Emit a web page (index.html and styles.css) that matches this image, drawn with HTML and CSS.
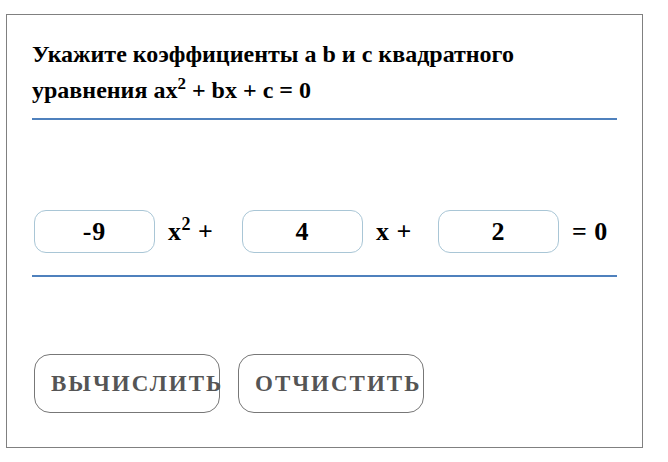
FILE: index.html
```html
<!DOCTYPE html>
<html lang="ru">
<head>
<meta charset="utf-8">
<link rel="stylesheet" href="styles.css">
</head>
<body>
<div class="card">
  <h1 class="title">Укажите коэффициенты а b и с квадратного уравнения ax<sup>2</sup> + bx + c = 0</h1>
  <div class="equation">
    <input class="coef" type="text" value="-9">
    <span class="term term-a">x<sup>2</sup> +</span>
    <input class="coef" type="text" value="4">
    <span class="term term-b">x +</span>
    <input class="coef" type="text" value="2">
    <span class="term">= 0</span>
  </div>
  <div class="actions">
    <button class="btn" type="button">Вычислить</button>
    <button class="btn" type="button">Отчистить</button>
  </div>
</div>
</body>
</html>
```

FILE: styles.css
```css
html, body {
  margin: 0;
  padding: 0;
  background: #fff;
}
body {
  font-family: "Liberation Serif", "Times New Roman", serif;
  color: #000;
}
.card {
  margin: 14px 0 0 6px;
  width: 637px;
  height: 434px;
  border: 1px solid #808080;
  padding: 0 25px;
  box-sizing: border-box;
}
.title {
  margin: 21px 0 0 0;
  font-size: 24px;
  font-weight: bold;
  letter-spacing: 0;
  line-height: 36px;
  padding-bottom: 10px;
  border-bottom: 2px solid #4f81bd;
}
.title sup {
  font-size: 17px;
  line-height: 0;
}
.equation {
  margin-top: 90px;
  display: flex;
  align-items: center;
  padding: 0 2px 22px 2px;
  border-bottom: 2px solid #4f81bd;
}
.coef {
  flex: none;
  width: 121px;
  height: 43px;
  box-sizing: border-box;
  border: 1px solid #a9c6d6;
  border-radius: 12px;
  text-align: center;
  font-family: inherit;
  font-size: 26px;
  font-weight: bold;
  letter-spacing: 1px;
  color: #000;
  padding: 0;
  outline: none;
  background: #fff;
}
.term {
  flex: none;
  box-sizing: border-box;
  padding-left: 13px;
  font-size: 26px;
  font-weight: bold;
  letter-spacing: 0.5px;
  white-space: nowrap;
}
.term sup {
  font-size: 18px;
  line-height: 0;
}
.term-a {
  width: 87px;
}
.term-b {
  width: 75px;
}
.actions {
  margin-top: 77px;
  display: flex;
  gap: 18px;
  padding-left: 2px;
}
.btn {
  flex: none;
  width: 186px;
  height: 59px;
  padding: 0 0 0 16px;
  text-align: left;
  background: #fff;
  border: 1px solid #777;
  border-radius: 16px;
  font-family: inherit;
  font-size: 23px;
  font-weight: bold;
  text-transform: uppercase;
  letter-spacing: 2px;
  color: #555;
  white-space: nowrap;
}
```
